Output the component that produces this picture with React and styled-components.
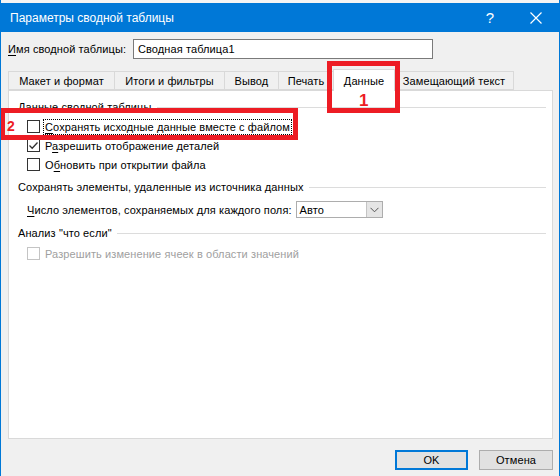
import React from "react";
import styled, { createGlobalStyle } from "styled-components";

const GlobalStyle = createGlobalStyle`
  html, body {
    margin: 0;
    padding: 0;
    background: #f0f0f0;
  }
  * { box-sizing: border-box; }
`;

const Window = styled.div`
  position: relative;
  width: 560px;
  height: 476px;
  background: #f0f0f0;
  border-left: 1px solid #0078d7;
  border-right: 1px solid #0078d7;
  font-family: "Liberation Sans", Arial, sans-serif;
  font-size: 11px;
  letter-spacing: 0.1px;
  color: #000;
  display: flex;
  flex-direction: column;
  overflow: hidden;
  white-space: nowrap;
`;

const TopStrip = styled.div`
  height: 3px;
  background: #f4f4f4;
`;

const TitleBar = styled.div`
  height: 29px;
  background: #0078d7;
  color: #fff;
  display: flex;
  align-items: center;
  padding-left: 9px;
  font-size: 12px;
  letter-spacing: 0;
`;

const Title = styled.div`
  flex: 1;
`;

const TitleButton = styled.div`
  width: 46px;
  height: 29px;
  display: flex;
  align-items: center;
  justify-content: center;
  font-size: 15px;
`;

const NameRow = styled.div`
  display: flex;
  align-items: center;
  margin-top: 7px;
  padding-left: 7px;
  height: 20px;
`;

const NameLabel = styled.label`
  width: 125px;
`;

const TextInput = styled.div`
  width: 300px;
  height: 20px;
  background: #fff;
  border: 1px solid #7a7a7a;
  padding-left: 4px;
  display: flex;
  align-items: center;
`;

const U = styled.span`
  text-decoration: underline;
  text-underline-offset: 2px;
`;

const TabStrip = styled.div`
  display: flex;
  align-items: flex-end;
  margin-top: 9px;
  margin-left: 7px;
  height: 22px;
  position: relative;
  z-index: 1;
`;

const Tab = styled.div`
  width: ${(p) => p.$w}px;
  height: ${(p) => (p.$active ? 22 : 19)}px;
  margin-left: ${(p) => (p.$first ? 0 : -1)}px;
  margin-bottom: ${(p) => (p.$active ? -1 : 0)}px;
  background: ${(p) => (p.$active ? "#fff" : "#f0f0f0")};
  border: 1px solid #d9d9d9;
  border-bottom: ${(p) => (p.$active ? "none" : "1px solid #d9d9d9")};
  display: flex;
  align-items: center;
  justify-content: center;
  padding-top: ${(p) => (p.$active ? 0 : 1)}px;
`;

const Panel = styled.div`
  margin-left: 7px;
  width: 545px;
  height: 349px;
  background: #fff;
  border: 1px solid #d9d9d9;
  padding: 8px 6px 0 9px;
  display: flex;
  flex-direction: column;
`;

const GroupTitle = styled.div`
  display: flex;
  align-items: center;
  gap: 5px;
  height: 16px;
  margin-top: ${(p) => p.$mt || 0}px;
  color: #000;
  &::after {
    content: "";
    flex: 1;
    height: 1px;
    background: #dcdcdc;
  }
`;

const CheckRow = styled.div`
  display: flex;
  align-items: center;
  height: 19px;
  padding-left: 9px;
  margin-top: ${(p) => p.$mt || 0}px;
  color: ${(p) => (p.$disabled ? "#a0a0a0" : "#000")};
`;

const Box = styled.span`
  width: 13px;
  height: 13px;
  border: 1px solid ${(p) => (p.$disabled ? "#c4c4c4" : "#333")};
  background: #fff;
  display: flex;
  align-items: center;
  justify-content: center;
  margin-right: 4px;
`;

const CheckText = styled.span`
  padding: 0 1px;
  line-height: 14px;
  outline: ${(p) => (p.$focus ? "1px dotted #000" : "none")};
`;

const SelectRow = styled.div`
  display: flex;
  align-items: center;
  height: 21px;
  padding-left: 9px;
  margin-top: 4px;
`;

const SelectBox = styled.div`
  margin-left: 4px;
  width: 87px;
  height: 17px;
  border: 1px solid #adadad;
  background: #fff;
  display: flex;
  align-items: center;
`;

const SelectValue = styled.span`
  flex: 1;
  padding-left: 3px;
`;

const SelectArrow = styled.span`
  width: 16px;
  height: 15px;
  background: #e5e5e5;
  border-left: 1px solid #c4c4c4;
  display: flex;
  align-items: center;
  justify-content: center;
`;

const Footer = styled.div`
  display: flex;
  justify-content: flex-end;
  gap: 11px;
  margin-top: 11px;
  padding-right: 6px;
`;

const Button = styled.div`
  width: ${(p) => p.$w}px;
  height: 20px;
  background: #e1e1e1;
  border: ${(p) => (p.$primary ? "2px solid #0078d7" : "1px solid #adadad")};
  display: flex;
  align-items: center;
  justify-content: center;
`;

const Marker = styled.div`
  position: absolute;
  left: ${(p) => p.$x}px;
  top: ${(p) => p.$y}px;
  width: ${(p) => p.$w}px;
  height: ${(p) => p.$h}px;
  border: 5px solid #ed1c24;
  z-index: 5;
  pointer-events: none;
`;

const MarkerNum = styled.span`
  position: absolute;
  left: ${(p) => p.$x}px;
  top: ${(p) => p.$y}px;
  color: #ed1c24;
  font-weight: 700;
  font-size: ${(p) => p.$size}px;
  font-family: "Liberation Sans", Arial, sans-serif;
  line-height: 1;
  z-index: 6;
`;

const Check = () => (
  <svg width="11" height="11" viewBox="0 0 11 11">
    <path d="M1.5 5.5 L4.2 8.2 L9.5 2.5" fill="none" stroke="#333" strokeWidth="1.3" />
  </svg>
);

const Chevron = () => (
  <svg width="9" height="6" viewBox="0 0 9 6">
    <path d="M0.5 0.8 L4.5 4.8 L8.5 0.8" fill="none" stroke="#555" strokeWidth="1" />
  </svg>
);

const CloseIcon = () => (
  <svg width="12" height="12" viewBox="0 0 12 12">
    <path d="M0.5 0.5 L11.5 11.5 M11.5 0.5 L0.5 11.5" stroke="#fff" strokeWidth="1.2" />
  </svg>
);

const tabs = [
  { label: "Макет и формат", w: 107 },
  { label: "Итоги и фильтры", w: 111 },
  { label: "Вывод", w: 55 },
  { label: "Печать", w: 56 },
  { label: "Данные", w: 62, active: true },
  { label: "Замещающий текст", w: 120 },
];

export default function App() {
  return (
    <>
      <GlobalStyle />
      <Window>
        <TopStrip />
        <TitleBar>
          <Title>Параметры сводной таблицы</Title>
          <TitleButton>?</TitleButton>
          <TitleButton>
            <CloseIcon />
          </TitleButton>
        </TitleBar>

        <NameRow>
          <NameLabel>
            <U>И</U>мя сводной таблицы:
          </NameLabel>
          <TextInput>Сводная таблица1</TextInput>
        </NameRow>

        <TabStrip>
          {tabs.map((t, i) => (
            <Tab key={t.label} $w={t.w} $active={t.active} $first={i === 0}>
              {t.label}
            </Tab>
          ))}
        </TabStrip>

        <Panel>
          <GroupTitle>Данные сводной таблицы</GroupTitle>
          <CheckRow $mt={2}>
            <Box />
            <CheckText $focus>
              <U>С</U>охранять исходные данные вместе с файлом
            </CheckText>
          </CheckRow>
          <CheckRow>
            <Box>
              <Check />
            </Box>
            <CheckText>
              Р<U>а</U>зрешить отображение деталей
            </CheckText>
          </CheckRow>
          <CheckRow>
            <Box />
            <CheckText>
              О<U>б</U>новить при открытии файла
            </CheckText>
          </CheckRow>

          <GroupTitle $mt={5}>Сохранять элементы, удаленные из источника данных</GroupTitle>
          <SelectRow>
            <span>
              <U>Ч</U>исло элементов, сохраняемых для каждого поля:
            </span>
            <SelectBox>
              <SelectValue>Авто</SelectValue>
              <SelectArrow>
                <Chevron />
              </SelectArrow>
            </SelectBox>
          </SelectRow>

          <GroupTitle $mt={5}>Анализ "что если"</GroupTitle>
          <CheckRow $mt={3} $disabled>
            <Box $disabled />
            <CheckText>Разрешить изменение ячеек в области значений</CheckText>
          </CheckRow>
        </Panel>

        <Footer>
          <Button $primary $w={73}>OK</Button>
          <Button $w={74}>Отмена</Button>
        </Footer>

        <Marker $x={326} $y={61} $w={73} $h={52} />
        <MarkerNum $x={358} $y={92} $size={17}>1</MarkerNum>
        <Marker $x={-1} $y={108} $w={298} $h={32} />
        <MarkerNum $x={6} $y={119} $size={14}>2</MarkerNum>
      </Window>
    </>
  );
}
